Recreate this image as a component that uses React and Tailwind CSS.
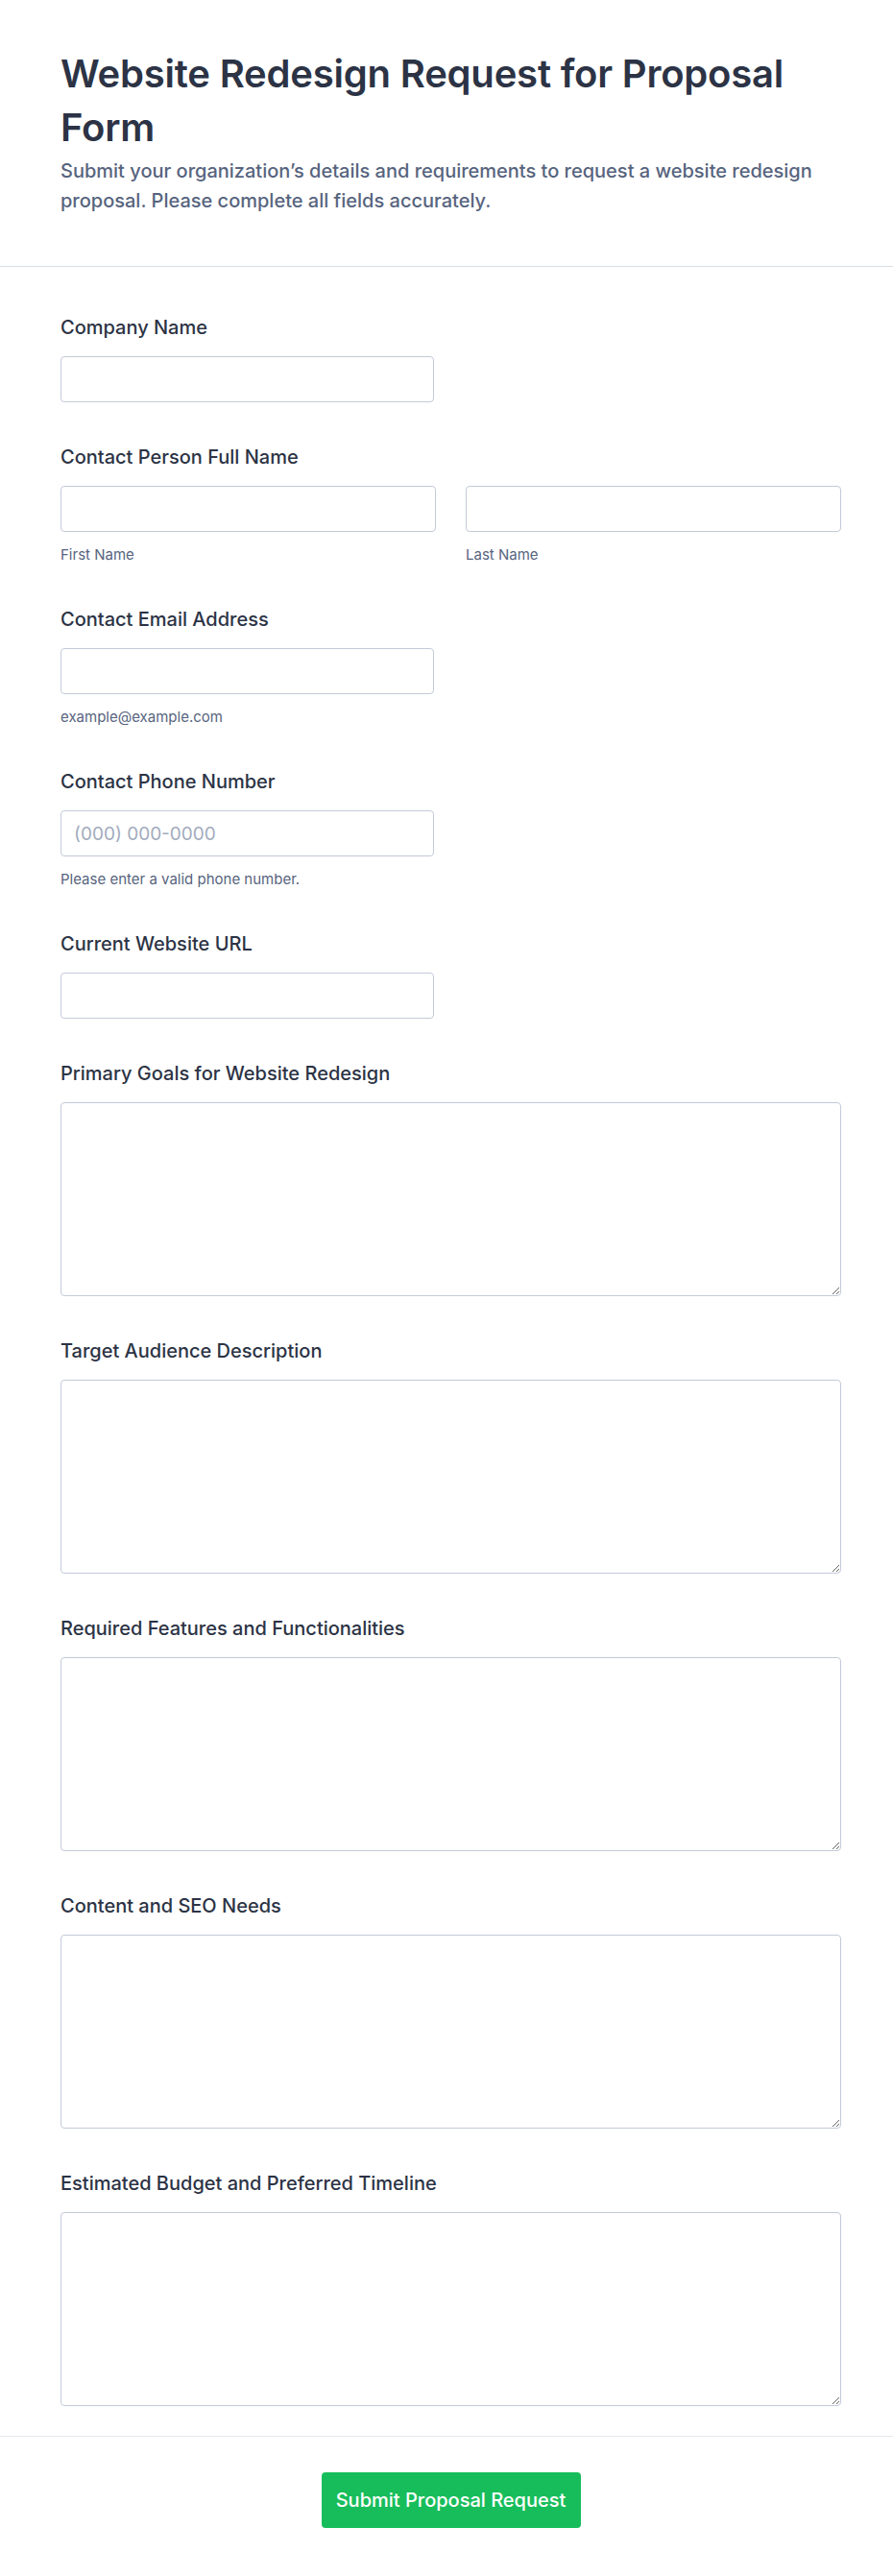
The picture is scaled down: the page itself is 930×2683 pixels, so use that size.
import React from "react";

function Label({ children }) {
  return (
    <label className="block text-[20px] leading-[28px] font-medium text-[#2c3345] mb-[16px]">
      {children}
    </label>
  );
}

function Sub({ children }) {
  return <div className="mt-[14px] text-[15px] leading-[20px] text-[#57647e]">{children}</div>;
}

const inputCls =
  "block h-[48px] w-full rounded-[4px] border border-[#c3cad8] bg-white px-[13px] text-[19px] text-[#2c3345] placeholder:text-[#a2abbd] outline-none";
const areaCls =
  "block h-[202px] w-full rounded-[4px] border border-[#c3cad8] bg-white px-[13px] py-[10px] text-[19px] text-[#2c3345] outline-none";

function TextArea({ label }) {
  return (
    <div>
      <Label>{label}</Label>
      <textarea className={areaCls} />
    </div>
  );
}

export default function App() {
  return (
    <div className="min-h-[2683px] bg-white font-['Inter',sans-serif]">
      <header className="pl-[63px] pr-[54px] pt-[49px] pb-[52px] border-b border-[#d8dce4]">
        <h1 className="text-[40px] leading-[56px] font-semibold text-[#2c3345] tracking-[-0.2px]">
          Website Redesign Request for Proposal Form
        </h1>
        <p className="mt-[2px] text-[20px] leading-[31px] font-medium text-[#57647e]">
          Submit your organization’s details and requirements to request a website redesign proposal. Please complete all fields accurately.
        </p>
      </header>

      <form className="pl-[63px] pr-[54px] pt-[49px] pb-[31px] flex flex-col gap-[43px]">
        <div>
          <Label>Company Name</Label>
          <div className="w-[389px]">
            <input className={inputCls} />
          </div>
        </div>

        <div>
          <Label>Contact Person Full Name</Label>
          <div className="grid grid-cols-2 gap-[31px]">
            <div>
              <input className={inputCls} />
              <Sub>First Name</Sub>
            </div>
            <div>
              <input className={inputCls} />
              <Sub>Last Name</Sub>
            </div>
          </div>
        </div>

        <div>
          <Label>Contact Email Address</Label>
          <div className="w-[389px]">
            <input className={inputCls} />
          </div>
          <Sub>example@example.com</Sub>
        </div>

        <div>
          <Label>Contact Phone Number</Label>
          <div className="w-[389px]">
            <input className={inputCls} placeholder="(000) 000-0000" />
          </div>
          <Sub>Please enter a valid phone number.</Sub>
        </div>

        <div>
          <Label>Current Website URL</Label>
          <div className="w-[389px]">
            <input className={inputCls} />
          </div>
        </div>

        <TextArea label="Primary Goals for Website Redesign" />
        <TextArea label="Target Audience Description" />
        <TextArea label="Required Features and Functionalities" />
        <TextArea label="Content and SEO Needs" />
        <TextArea label="Estimated Budget and Preferred Timeline" />
      </form>

      <footer className="border-t border-[#e6e8ee] pl-[63px] pr-[54px] pt-[37px] pb-[50px] flex justify-center">
        <button
          type="button"
          className="w-[270px] h-[58px] rounded-[4px] bg-[#18bd5b] text-white text-[20px] font-medium"
        >
          Submit Proposal Request
        </button>
      </footer>
    </div>
  );
}
